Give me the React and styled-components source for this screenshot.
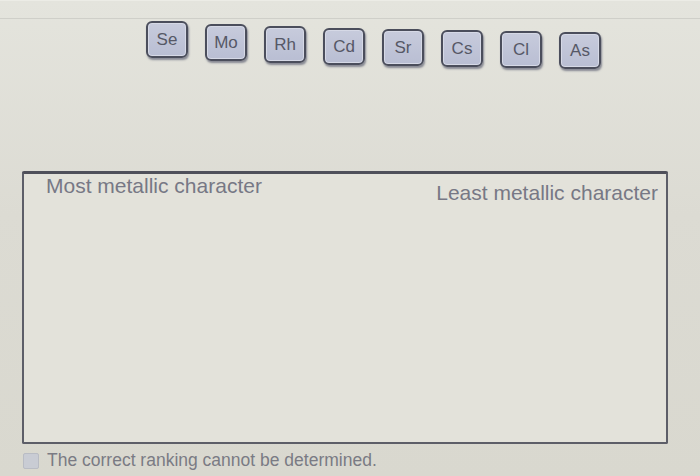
import styled, { createGlobalStyle } from 'styled-components';

const Global = createGlobalStyle`
  html, body { margin: 0; padding: 0; }
  body {
    width: 700px;
    height: 476px;
    overflow: hidden;
    background: linear-gradient(180deg, #e4e4dd 0%, #dcdbd3 45%, #d9d8cf 100%);
    font-family: "Liberation Sans", Arial, sans-serif;
  }
`

const Page = styled.div`
  height: 476px;
  display: flex;
  flex-direction: column;
  border-top: 1px solid #ececE6;
  box-sizing: border-box;
`

const TopRule = styled.div`
  margin-top: 17px;
  height: 1px;
  background: #cfcfc9;
`

const Tiles = styled.div`
  display: flex;
  gap: 17px;
  padding-left: 146px;
  margin-top: 2px;
  height: 100px;
  align-items: flex-start;
`

const Tile = styled.div`
  width: 38px;
  height: 33px;
  margin-top: ${p => p.drop}px;
  border: 2px solid #4b4e5c;
  border-radius: 6px;
  background: linear-gradient(180deg, #c7cbdc 0%, #b9bed3 100%);
  box-shadow: 1px 2px 2px rgba(60, 64, 90, 0.55), inset 0 0 0 1px #d6d9e6;
  display: flex;
  align-items: center;
  justify-content: center;
  font-size: 17px;
  color: #565866;
`

const Board = styled.div`
  margin: 50px 32px 0 22px;
  height: 268px;
  border: 2px solid #5d5e68;
  border-top: 3px solid #4f505a;
  border-radius: 2px;
  background: #e3e2da;
  display: flex;
  justify-content: space-between;
  align-items: flex-start;
  padding: 0 8px 0 22px;
`

const Label = styled.span`
  font-size: 21px;
  color: #777885;
  margin-top: ${p => p.drop || 0}px;
`

const Footer = styled.label`
  display: flex;
  align-items: center;
  gap: 8px;
  margin: 6px 0 0 23px;
  font-size: 17.5px;
  color: #7a7b84;
`

const Box = styled.span`
  width: 14px;
  height: 14px;
  border: 1px solid #b9bcc4;
  border-radius: 2px;
  background: #c9ccd4;
`

const elements = [
  ['Se', 0], ['Mo', 3], ['Rh', 5], ['Cd', 7],
  ['Sr', 8], ['Cs', 9], ['Cl', 10], ['As', 11],
]

export default function App() {
  return (
    <Page>
      <Global />
      <TopRule />
      <Tiles>
        {elements.map(([sym, drop]) => (
          <Tile key={sym} drop={drop}>{sym}</Tile>
        ))}
      </Tiles>
      <Board>
        <Label>Most metallic character</Label>
        <Label drop={7}>Least metallic character</Label>
      </Board>
      <Footer>
        <Box />
        The correct ranking cannot be determined.
      </Footer>
    </Page>
  )
}
